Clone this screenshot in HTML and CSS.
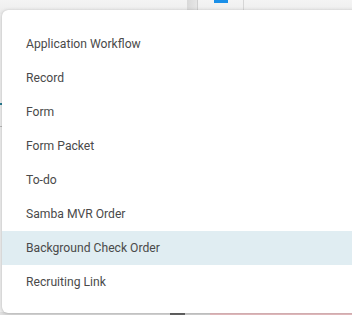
FILE: index.html
```html
<!DOCTYPE html>
<html>
<head>
<meta charset="utf-8">
<link rel="stylesheet" href="styles.css">
</head>
<body>
<div class="backdrop">
  <div class="topbar">
    <div class="tb-left"></div>
    <div class="tb-sep"></div>
    <div class="tb-btn"><span class="tb-ind"></span></div>
    <div class="tb-right"></div>
  </div>
  <div class="side">
    <span class="side-teal"></span>
    <span class="side-line"></span>
  </div>
  <div class="bottombar">
    <div class="bb-a"></div>
    <div class="bb-dark"></div>
    <div class="bb-b"></div>
    <div class="bb-pink"></div>
  </div>
</div>
<ul class="menu">
  <li class="item">Application Workflow</li>
  <li class="item">Record</li>
  <li class="item">Form</li>
  <li class="item">Form Packet</li>
  <li class="item">To-do</li>
  <li class="item">Samba MVR Order</li>
  <li class="item active">Background Check Order</li>
  <li class="item">Recruiting Link</li>
</ul>
</body>
</html>
```

FILE: styles.css
```css
html, body {
  margin: 0;
  padding: 0;
  width: 352px;
  height: 315px;
  overflow: hidden;
  font-family: Roboto, "Liberation Sans", sans-serif;
}
.backdrop {
  position: relative;
  width: 352px;
  height: 315px;
  background: #f1f1f1;
  display: flex;
  flex-direction: column;
}
.topbar {
  display: flex;
  height: 14px;
  background: linear-gradient(#f4f4f4, #ececec);
}
.tb-left { width: 187px; }
.tb-sep {
  width: 10px;
  background: linear-gradient(90deg, #d9d9d9, #e6e6e6);
  border-right: 1px solid #cfcfcf;
}
.tb-btn {
  width: 45px;
  border-right: 1px solid #d6d6d6;
  position: relative;
}
.tb-ind {
  position: absolute;
  left: 16px;
  top: 0;
  width: 14px;
  height: 3px;
  background: #1a8fe8;
}
.tb-right { flex: 1; }
.side {
  flex: 1;
  position: relative;
}
.side-teal {
  position: absolute;
  left: 0;
  top: 89px;
  width: 3px;
  height: 2px;
  background: #2a7f95;
}
.side-line {
  position: absolute;
  left: 0;
  top: 112px;
  width: 3px;
  height: 1px;
  background: #bdbdbd;
}
.bottombar {
  display: flex;
  height: 3px;
}
.bb-a { width: 170px; background: #e2e2e2; }
.bb-dark { width: 15px; background: #6a6a6a; }
.bb-b { width: 25px; background: #dcdcdc; }
.bb-pink { flex: 1; background: #f3c9cc; }
.menu {
  position: absolute;
  left: 2px;
  top: 10px;
  width: 360px;
  height: 303px;
  box-sizing: border-box;
  margin: 0;
  padding: 17px 0 0;
  list-style: none;
  background: #fff;
  border-radius: 6px;
  box-shadow: 0 1px 4px rgba(0, 0, 0, 0.22), 0 0 1px rgba(0, 0, 0, 0.15);
}
.item {
  height: 34px;
  line-height: 34px;
  padding-left: 24px;
  font-size: 12.15px;
  color: #4a4a4a;
}
.item.active {
  background: #e0edf2;
}
```
